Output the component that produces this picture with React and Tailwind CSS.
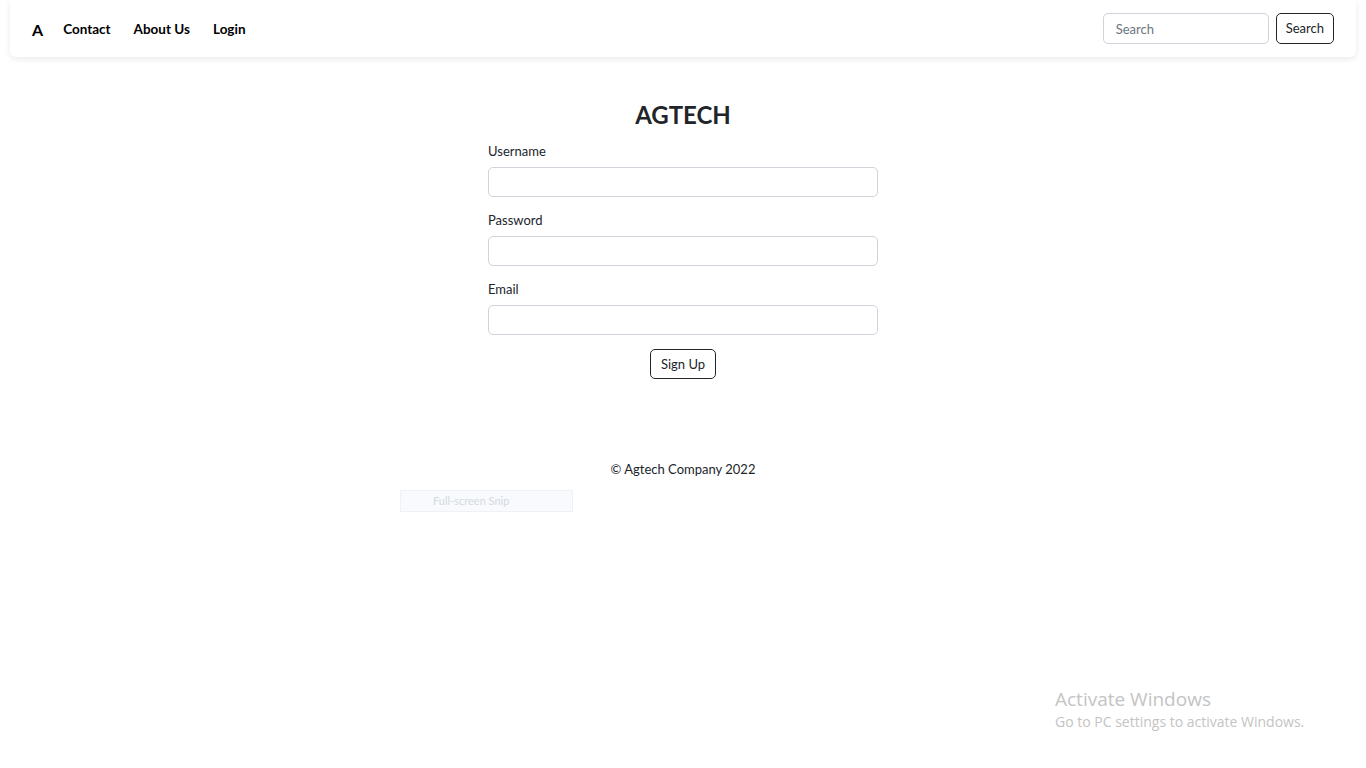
const Field = ({ label, type = "text" }) => (
    <div className="mb-[13px]">
        <label className="block text-[13px] leading-5 text-[#212529] mb-[6px]">{label}</label>
        <input
            type={type}
            className="block w-full h-[30px] rounded-[5px] border border-[#ced4da] bg-white px-3 text-[13px] outline-none"
        />
    </div>
);

const App = () => {
    return (
        <div className="relative min-h-[768px] bg-white font-['Lato',_'Noto_Sans',_sans-serif] text-[#212529]">
            {/* navbar */}
            <nav className="mx-[10px] h-[57px] flex items-center justify-between rounded-b-md bg-white pl-[22px] pr-[22px] shadow-[0_2px_6px_rgba(0,0,0,0.09)]">
                <div className="flex items-center pt-[2px]">
                    <span className="text-[16px] font-bold text-black">A</span>
                    <div className="ml-5 flex items-center gap-[23px] text-[13.5px] font-bold text-black">
                        <a href="#">Contact</a>
                        <a href="#">About Us</a>
                        <a href="#">Login</a>
                    </div>
                </div>
                <form className="flex items-center gap-[7px]" onSubmit={(e) => e.preventDefault()}>
                    <input
                        placeholder="Search"
                        className="w-[166px] h-[31px] rounded-[5px] border border-[#ced4da] px-3 text-[13px] placeholder:text-[#6c757d] outline-none"
                    />
                    <button className="h-[31px] px-[9px] pt-[1px] rounded-[5px] border border-[#212529] text-[13px] text-[#212529]">
                        Search
                    </button>
                </form>
            </nav>

            {/* signup form */}
            <main className="w-[390px] mx-auto pt-[42px]">
                <h1 className="text-center text-[24px] leading-8 font-bold text-[#212529] mb-[10px]">AGTECH</h1>
                <Field label="Username" />
                <Field label="Password" type="password" />
                <Field label="Email" type="email" />
                <div className="flex justify-center mt-[14px]">
                    <button className="h-[30px] px-[10px] pt-[1px] rounded-[5px] border border-[#212529] text-[13px] text-[#212529]">
                        Sign Up
                    </button>
                </div>
            </main>

            <footer className="mt-[80px] text-center text-[13px] leading-5 text-[#212529]">
                © Agtech Company 2022
            </footer>

            {/* snip overlay */}
            <div className="absolute left-[400px] top-[490px] w-[173px] h-[22px] border border-[#eef2f7] bg-[#f8fafd] text-[11px] leading-5 text-[#d4d9e0] pl-[32px]">
                Full-screen Snip
            </div>

            {/* windows watermark */}
            <div className="absolute left-[1055px] top-[687px] text-[#c4c4c4] font-['Open_Sans',_sans-serif]">
                <div className="text-[19px] leading-6">Activate Windows</div>
                <div className="text-[14px] leading-5 mt-[1px]">Go to PC settings to activate Windows.</div>
            </div>
        </div>
    );
};

export default App;
